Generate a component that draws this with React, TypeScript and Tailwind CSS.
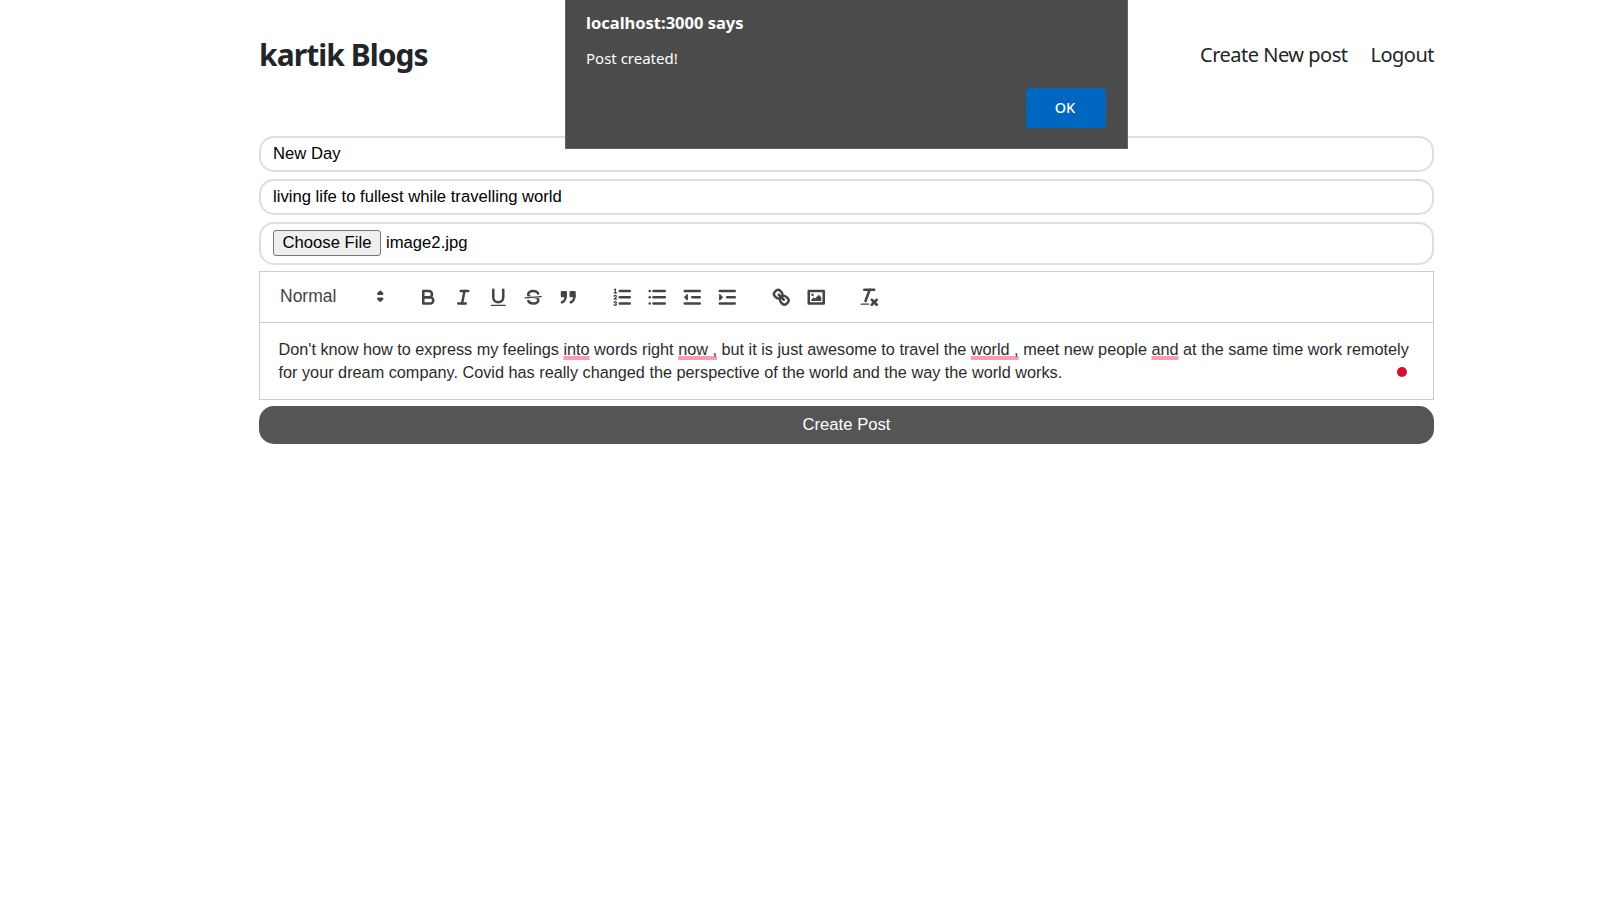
import React from "react";

const S = "#444";
function Ic({ children }: { children: React.ReactNode }) {
  return (
    <button className="w-[35px] h-[30px] flex items-center justify-center shrink-0">
      <svg viewBox="0 0 18 18" className="w-[22.5px] h-[22.5px]" fill="none" stroke={S} strokeWidth={2} strokeLinecap="round" strokeLinejoin="round">
        {children}
      </svg>
    </button>
  );
}
const thin = { strokeWidth: 1 };
const fillOnly = { fill: S, stroke: "none" };

function Mark({ children }: { children: React.ReactNode }) {
  return (
    <span className="underline decoration-[#ff9bb0] decoration-[4px] underline-offset-[1px] [text-decoration-skip-ink:none]">
      {children}
    </span>
  );
}

export default function App() {
  return (
    <div className="relative min-h-[917px] bg-white overflow-hidden [font-family:'Liberation_Sans',Arial,sans-serif]">
      <div className="ml-[259px] w-[1175px]">
        <header className="h-[136px] pb-[27px] flex items-center justify-between [font-family:'Noto_Sans',sans-serif] text-[#212529]">
          <h1 className="text-[30px] font-bold leading-none tracking-[-0.95px]">kartik Blogs</h1>
          <nav className="flex gap-[23px] text-[20px] font-normal tracking-[-0.5px]">
            <a>Create New post</a>
            <a>Logout</a>
          </nav>
        </header>

        <div className="flex flex-col gap-[7px]">
          <div className="h-[36px] rounded-[15px] border-[2.5px] border-[#dedede] pl-[12px] pb-[1px] flex items-center text-[16.67px] text-black">New Day</div>
          <div className="h-[36px] rounded-[15px] border-[2.5px] border-[#dedede] pl-[12px] pb-[1px] flex items-center text-[16.67px] text-black">living life to fullest while travelling world</div>
          <div className="h-[43px] rounded-[15px] border-[2.5px] border-[#dedede] pl-[12px] pb-[1px] flex items-center text-[16.67px] text-black">
            <span className="h-[26px] w-[108px] pb-[1px] rounded-[3px] border border-[#767676] bg-[#efefef] flex items-center justify-center">Choose File</span>
            <span className="ml-[5px] -mt-[1px]">image2.jpg</span>
          </div>

          <div className="border border-[#cccccc] -mt-[1px]">
            <div className="h-[51px] border-b border-[#cccccc] flex items-center pl-[10px]">
              <div className="w-[122px] h-[30px] pl-[10px] pr-[1px] pb-[1px] flex items-center justify-between text-[17.5px] text-[#444] shrink-0">
                <span>Normal</span>
                <svg viewBox="0 0 18 18" className="w-[22.5px] h-[22.5px]" fill={S} stroke={S} strokeWidth={2} strokeLinejoin="round">
                  <polygon points="7.5 11 9 12.5 10.5 11 7.5 11" />
                  <polygon points="7.5 7 9 5.5 10.5 7 7.5 7" />
                </svg>
              </div>
              <div className="flex ml-[19px] mr-[18.75px]">
                <Ic>
                  <path d="M5,4H9.5A2.5,2.5,0,0,1,12,6.5v0A2.5,2.5,0,0,1,9.5,9H5A0,0,0,0,1,5,9V4A0,0,0,0,1,5,4Z" />
                  <path d="M5,9h5.5A2.5,2.5,0,0,1,13,11.5v0A2.5,2.5,0,0,1,10.5,14H5a0,0,0,0,1,0,0V9A0,0,0,0,1,5,9Z" />
                </Ic>
                <Ic>
                  <line x1="7" x2="13" y1="4" y2="4" />
                  <line x1="5" x2="11" y1="14" y2="14" />
                  <line x1="8" x2="10" y1="14" y2="4" />
                </Ic>
                <Ic>
                  <path d="M5,3V9a4.012,4.012,0,0,0,4,4H9a4.012,4.012,0,0,0,4-4V3" />
                  <rect {...fillOnly} height="1" rx=".5" ry=".5" width="12" x="3" y="15" />
                </Ic>
                <Ic>
                  <line {...thin} x1="15.5" x2="2.5" y1="8.5" y2="9.5" />
                  <path {...fillOnly} d="M9.007,8C6.542,7.791,6,7.519,6,6.5,6,5.792,7.283,5,9,5c1.571,0,2.765.679,2.969,1.309a1,1,0,0,0,1.9-.617C13.356,4.106,11.354,3,9,3,6.2,3,4,4.538,4,6.5a3.2,3.2,0,0,0,.5,1.843Z" />
                  <path {...fillOnly} d="M8.984,10C11.457,10.208,12,10.479,12,11.5c0,.708-1.283,1.5-3,1.5-1.571,0-2.765-.679-2.969-1.309a1,1,0,1,0-1.9.617C4.644,13.894,6.646,15,9,15c2.8,0,5-1.538,5-3.5a3.2,3.2,0,0,0-.5-1.843Z" />
                </Ic>
                <Ic>
                  <rect fill={S} height="3" width="3" x="4" y="5" />
                  <rect fill={S} height="3" width="3" x="11" y="5" />
                  <path d="M7,8c0,4.031-3,5-3,5" />
                  <path d="M14,8c0,4.031-3,5-3,5" />
                </Ic>
              </div>
              <div className="flex mr-[18.75px]">
                <Ic>
                  <line x1="7" x2="15" y1="4" y2="4" />
                  <line x1="7" x2="15" y1="9" y2="9" />
                  <line x1="7" x2="15" y1="14" y2="14" />
                  <line {...thin} x1="2.5" x2="4.5" y1="5.5" y2="5.5" />
                  <path {...fillOnly} d="M3.5,6A0.5,0.5,0,0,1,3,5.5V3.085l-0.276.138A0.5,0.5,0,0,1,2.053,3c-0.124-.247-0.023-0.324.224-0.447l1-.5A0.5,0.5,0,0,1,4,2.5v3A0.5,0.5,0,0,1,3.5,6Z" />
                  <path {...thin} d="M4.5,10.5h-2c0-.234,1.85-1.076,1.85-2.234A0.959,0.959,0,0,0,2.5,8.156" />
                  <path {...thin} d="M2.5,14.846a0.959,0.959,0,0,0,1.85-.109A0.7,0.7,0,0,0,3.75,14a0.688,0.688,0,0,0,.6-0.736,0.959,0.959,0,0,0-1.85-.109" />
                </Ic>
                <Ic>
                  <line x1="6" x2="15" y1="4" y2="4" />
                  <line x1="6" x2="15" y1="9" y2="9" />
                  <line x1="6" x2="15" y1="14" y2="14" />
                  <line x1="3" x2="3" y1="4" y2="4" />
                  <line x1="3" x2="3" y1="9" y2="9" />
                  <line x1="3" x2="3" y1="14" y2="14" />
                </Ic>
                <Ic>
                  <line x1="3" x2="15" y1="14" y2="14" />
                  <line x1="3" x2="15" y1="4" y2="4" />
                  <line x1="9" x2="15" y1="9" y2="9" />
                  <polyline fill={S} strokeWidth={1} points="5 7 5 11 3 9 5 7" />
                </Ic>
                <Ic>
                  <line x1="3" x2="15" y1="14" y2="14" />
                  <line x1="3" x2="15" y1="4" y2="4" />
                  <line x1="9" x2="15" y1="9" y2="9" />
                  <polyline fill={S} strokeWidth={1} points="3 7 3 11 5 9 3 7" />
                </Ic>
              </div>
              <div className="flex mr-[18px]">
                <Ic>
                  <line x1="7" x2="11" y1="7" y2="11" />
                  <path d="M8.9,4.577a3.476,3.476,0,0,1,.36,4.679A3.476,3.476,0,0,1,4.577,8.9C3.185,7.5,2.035,6.4,4.217,4.217S7.5,3.185,8.9,4.577Z" />
                  <path d="M13.423,9.1a3.476,3.476,0,0,0-4.679-.36,3.476,3.476,0,0,0,.36,4.679c1.392,1.392,2.5,2.542,4.679.36S14.815,10.5,13.423,9.1Z" />
                </Ic>
                <Ic>
                  <rect height="10" width="12" x="3" y="4" />
                  <circle {...fillOnly} cx="6" cy="7" r="1" />
                  <polyline {...fillOnly} points="5 12 5 11 7 9 8 10 11 7 13 9 13 12 5 12" />
                </Ic>
              </div>
              <div className="flex">
                <Ic>
                  <line x1="5" x2="13" y1="3" y2="3" />
                  <line x1="6" x2="9.35" y1="12" y2="3" />
                  <line x1="11" x2="15" y1="11" y2="15" />
                  <line x1="15" x2="11" y1="11" y2="15" />
                  <rect {...fillOnly} height="1" rx=".5" ry=".5" width="7" x="2" y="14" />
                </Ic>
              </div>
            </div>
            <div className="relative h-[76px] pl-[18.5px] pr-[18.75px] pt-[15px] text-[16.25px] leading-[23px] text-[#2b2b2b]">
              Don't know how to express my feelings <Mark>into</Mark> words right <Mark>now ,</Mark> but it is just awesome to travel the <Mark>world ,</Mark> meet new people <Mark>and</Mark> at the same time work remotely for your dream company. Covid has really changed the perspective of the world and the way the world works.
              <span className="absolute right-[26px] top-[44px] w-[10px] h-[10px] rounded-full bg-[#d60f30]" />
            </div>
          </div>
        </div>

        <button className="mt-[6px] w-full h-[38px] rounded-[15px] bg-[#555555] text-white text-[16.67px] pb-[2px] flex items-center justify-center">Create Post</button>
      </div>

      <div className="absolute left-[565px] top-0 w-[563px] h-[149px] bg-[#4b4b4b] border border-t-0 border-[#636363] [font-family:'Noto_Sans',sans-serif] text-white">
        <div className="pl-[20px] pt-[11px] text-[16.5px] font-bold leading-[24px]">localhost:3000 says</div>
        <div className="pl-[20px] pt-[12px] text-[15px] leading-[22px]">Post created!</div>
        <button className="absolute left-[460px] top-[88px] w-[80px] h-[40px] pr-[2px] rounded-[4px] bg-[#0067c0] text-[14.5px] font-medium">OK</button>
      </div>
    </div>
  );
}
